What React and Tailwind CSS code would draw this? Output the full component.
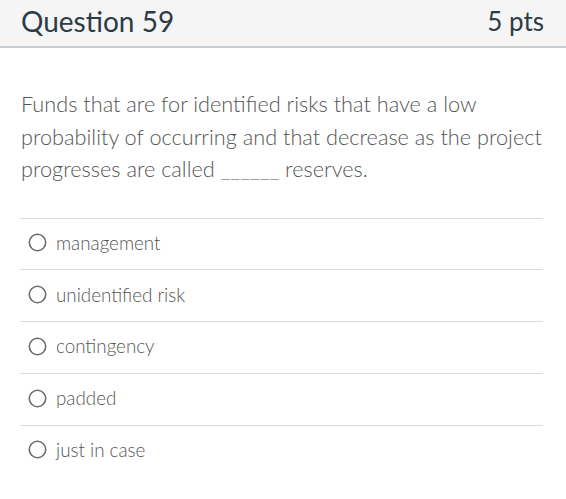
import React from 'react';

const options = ['management', 'unidentified risk', 'contingency', 'padded', 'just in case'];

const Radio = () => (
    <svg width="19" height="19" viewBox="0 0 19 19" className="shrink-0">
        <circle cx="9.5" cy="9.5" r="8.2" fill="white" stroke="#6b6b6b" strokeWidth="1.6" />
    </svg>
);

export default function App() {
    return (
        <div className="w-[566px] h-[499px] bg-white" style={{ fontFamily: 'Lato, "Open Sans", sans-serif' }}>
            <div className="h-[48px] bg-[#f5f5f5] border-b-2 border-[#c7cdd1] flex items-center justify-between pl-[21px] pr-[22px] pb-[4px]">
                <span className="text-[28px] text-[#2d3b45]">Question 59</span>
                <span className="text-[26px] text-[#2d3b45]">5 pts</span>
            </div>

            <div className="px-[21px] pt-[40px]">
                <p className="w-[524px] text-[21.7px] font-light leading-[32.5px] text-[#555]">
                    Funds that are for identified risks that have a low probability of occurring and that decrease as the project progresses are called ______ reserves.
                </p>

                <div className="mt-[32px] w-[523px] -ml-[1px]">
                    {options.map(o => (
                        <div key={o} className="h-[51.75px] border-t border-[#dcdcdc] flex items-center gap-[9px] pl-[8px] pb-[2px]">
                            <Radio />
                            <span className="text-[18.8px] font-light text-[#555]">{o}</span>
                        </div>
                    ))}
                </div>
            </div>
        </div>
    );
}
